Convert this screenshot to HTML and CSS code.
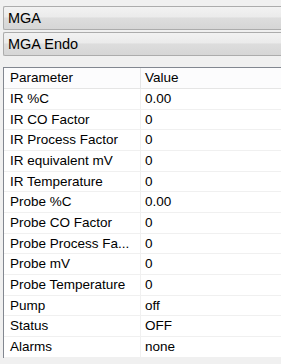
FILE: index.html
```html
<!DOCTYPE html>
<html lang="en">
<head>
    <meta charset="UTF-8">
    <title>MGA Endo</title>
    <link rel="stylesheet" href="styles.css">
</head>
<body>
    <div class="panel">
        <div class="combo">MGA</div>
        <div class="combo">MGA Endo</div>

        <div class="grid">
            <div class="row head">
                <div class="cell name">Parameter</div>
                <div class="cell">Value</div>
            </div>
            <div class="row"><div class="cell name">IR %C</div><div class="cell">0.00</div></div>
            <div class="row"><div class="cell name">IR CO Factor</div><div class="cell">0</div></div>
            <div class="row"><div class="cell name">IR Process Factor</div><div class="cell">0</div></div>
            <div class="row"><div class="cell name">IR equivalent mV</div><div class="cell">0</div></div>
            <div class="row"><div class="cell name">IR Temperature</div><div class="cell">0</div></div>
            <div class="row"><div class="cell name">Probe %C</div><div class="cell">0.00</div></div>
            <div class="row"><div class="cell name">Probe CO Factor</div><div class="cell">0</div></div>
            <div class="row"><div class="cell name">Probe Process Fa...</div><div class="cell">0</div></div>
            <div class="row"><div class="cell name">Probe mV</div><div class="cell">0</div></div>
            <div class="row"><div class="cell name">Probe Temperature</div><div class="cell">0</div></div>
            <div class="row"><div class="cell name">Pump</div><div class="cell">off</div></div>
            <div class="row"><div class="cell name">Status</div><div class="cell">OFF</div></div>
            <div class="row"><div class="cell name">Alarms</div><div class="cell">none</div></div>
        </div>
    </div>
</body>
</html>
```

FILE: styles.css
```css
body {
    margin: 0;
    background-color: #f0f0f0;
    font-family: "Liberation Sans", Arial, sans-serif;
    font-size: 13.5px;
    color: #000;
    overflow: hidden;
}
.panel {
    padding: 6px 0 0 3px;
}
.combo {
    height: 22px;
    line-height: 22px;
    padding-left: 4px;
    margin-bottom: 2px;
    font-size: 14.5px;
    border: 1px solid #acacac;
    border-right: none;
    border-radius: 2px 0 0 2px;
    background: linear-gradient(#f2f2f2 0%, #ebebeb 45%, #dddddd 50%, #d6d6d6 100%);
}
.grid {
    margin-top: 11px;
    background: #fff;
    border-top: 1px solid #828790;
    border-left: 1px solid #828790;
}
.row {
    display: flex;
    height: 19.67px;
    line-height: 20px;
    border-bottom: 1px solid #f0f0f0;
}
.row.head {
    height: 20px;
    background: #fcfcfd;
    border-bottom: 1px solid #e5e5e5;
}
.cell {
    padding-left: 4px;
    white-space: nowrap;
}
.cell.name {
    width: 130px;
    padding-left: 6px;
    border-right: 1px solid #f0f0f0;
}
.head .cell.name {
    border-right-color: #e5e5e5;
}
```
